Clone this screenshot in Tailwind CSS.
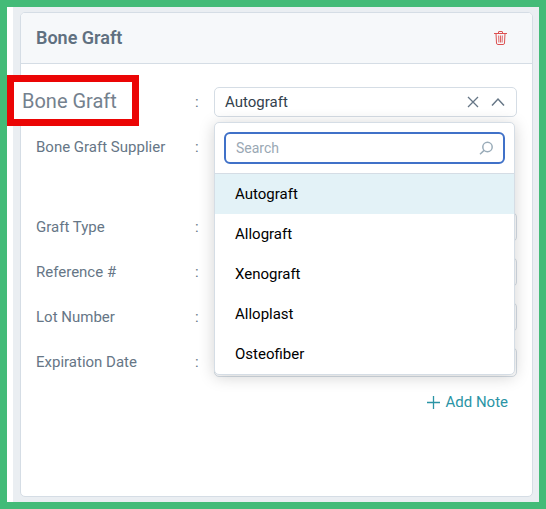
<!DOCTYPE html>
<html lang="en">
<head>
<meta charset="utf-8">
<meta name="viewport" content="width=device-width, initial-scale=1">
<title>Bone Graft</title>
<script src="https://cdn.jsdelivr.net/npm/@tailwindcss/browser@4"></script>
</head>
<body class="flex min-h-screen border-[7px] border-[#43bb78] bg-white pl-[6px] font-[Roboto,'Liberation_Sans',sans-serif] text-[15px] leading-5 text-[#667686]">
<main class="flex flex-1 bg-[#eaeef2] py-[5px] pr-[6px] pl-[7px]">
  <section class="flex flex-1 flex-col rounded-[5px] border border-[#d5dde5] bg-white">
    <header class="flex h-[51px] items-center justify-between rounded-t-[4px] border-b border-[#d5dde5] bg-[#f6f8fa] pr-[25px] pl-[15px]">
      <h1 class="text-[18px] leading-6 font-semibold text-[#607080]">Bone Graft</h1>
      <button type="button" aria-label="Delete" class="text-[#dc5050]">
        <svg width="13" height="14" viewBox="0 0 13 14" fill="none" stroke="currentColor">
          <path d="M0 2.500h13M4.500 2.500v-1.500q0-.5.5-.5h3q.5 0 .5.5v1.500M2 2.500l.5 9.500q.1 1.500 1.300 1.500h5.400q1.200 0 1.300-1.500l.5-9.500"/>
          <path stroke-width=".9" d="M4.700 4.500l.2 7M6.500 4.500v7M8.300 4.500l-.2 7"/>
        </svg>
      </button>
    </header>

    <form class="flex flex-col gap-[15px] px-[15px] pt-[23px]">
      <div class="relative grid grid-cols-[159px_19px_1fr] items-center">
        <label for="graft" class="absolute -top-3 -left-[29px] z-10 flex h-[51px] w-[132px] items-center border-[7px] border-[#eb0505] bg-white pt-px pl-2 text-[20px] leading-6 whitespace-nowrap text-[#74818e]">Bone Graft</label>
        <span class="col-start-2">:</span>
        <div class="relative">
          <div class="flex h-[30px] items-center rounded-[5px] border border-[#d5dde5] bg-white pr-[11px]">
            <button id="graft" type="button" role="combobox" aria-expanded="true" aria-controls="graft-list" class="flex-1 pl-[10px] text-left text-[#33414d]">Autograft</button>
            <button type="button" aria-label="Clear" class="mr-3">
              <svg width="12" height="12" viewBox="0 0 12 12" fill="none" stroke="currentColor" stroke-width="1.300"><path d="M1 1l10 10M11 1L1 11"/></svg>
            </button>
            <button type="button" aria-label="Close list">
              <svg width="14" height="12" viewBox="0 0 14 12" fill="none" stroke="currentColor" stroke-width="1.500"><path d="M1 9.500l6-6.500 6 6.500"/></svg>
            </button>
          </div>

          <div class="absolute top-[35px] right-[2px] left-0 z-20 rounded-[5px] border border-[#d5dde5] bg-white text-black shadow-[0_2px_16px_rgba(0,0,0,0.18)]">
            <div class="border-b border-[#d5dde5] px-[9px] py-[9px]">
              <div class="flex h-8 items-center rounded-[6px] border-2 border-[#4071c8] pr-[10px] pl-[10px]">
                <input type="search" aria-label="Search" placeholder="Search" class="min-w-0 flex-1 text-[14px] outline-none placeholder:text-[#9aa8b4]">
                <svg width="14" height="14" viewBox="0 0 14 14" fill="none" stroke="#9aacb9" stroke-width="1.500"><circle cx="8.500" cy="6" r="4.700"/><path d="M5.100 9.400L1 13.300"/></svg>
              </div>
            </div>
            <ul id="graft-list" role="listbox" aria-label="Bone Graft">
              <li role="option" aria-selected="true" class="flex h-10 items-center bg-[#e3f2f7] px-5">Autograft</li>
              <li role="option" aria-selected="false" class="flex h-10 items-center px-5">Allograft</li>
              <li role="option" aria-selected="false" class="flex h-10 items-center px-5">Xenograft</li>
              <li role="option" aria-selected="false" class="flex h-10 items-center px-5">Alloplast</li>
              <li role="option" aria-selected="false" class="flex h-10 items-center px-5">Osteofiber</li>
            </ul>
          </div>
        </div>
      </div>

      <div class="mb-[35px] grid grid-cols-[159px_19px_1fr] items-center">
        <label for="supplier">Bone Graft Supplier</label><span>:</span>
        <input id="supplier" class="h-[30px] w-11/12 rounded-[5px] border border-[#d5dde5] px-[10px]">
      </div>
      <div class="grid grid-cols-[159px_19px_1fr] items-center">
        <label for="type">Graft Type</label><span>:</span>
        <input id="type" class="h-[30px] min-w-0 rounded-[5px] border border-[#d5dde5] px-[10px]">
      </div>
      <div class="grid grid-cols-[159px_19px_1fr] items-center">
        <label for="reference">Reference #</label><span>:</span>
        <input id="reference" class="h-[30px] min-w-0 rounded-[5px] border border-[#d5dde5] px-[10px]">
      </div>
      <div class="grid grid-cols-[159px_19px_1fr] items-center">
        <label for="lot">Lot Number</label><span>:</span>
        <input id="lot" class="h-[30px] min-w-0 rounded-[5px] border border-[#d5dde5] px-[10px]">
      </div>
      <div class="grid grid-cols-[159px_19px_1fr] items-center">
        <label for="expiration">Expiration Date</label><span>:</span>
        <input id="expiration" class="h-[30px] min-w-0 rounded-[5px] border border-[#d5dde5] px-[10px]">
      </div>
      <button type="button" class="mr-[9px] flex items-center gap-[5px] self-end text-[#2a94a5]">
        <svg width="13" height="13" viewBox="0 0 13 13" fill="none" stroke="currentColor" stroke-width="1.300"><path d="M6.500 0v13M0 6.500h13"/></svg>
        Add Note
      </button>
    </form>
  </section>
</main>
</body>
</html>
